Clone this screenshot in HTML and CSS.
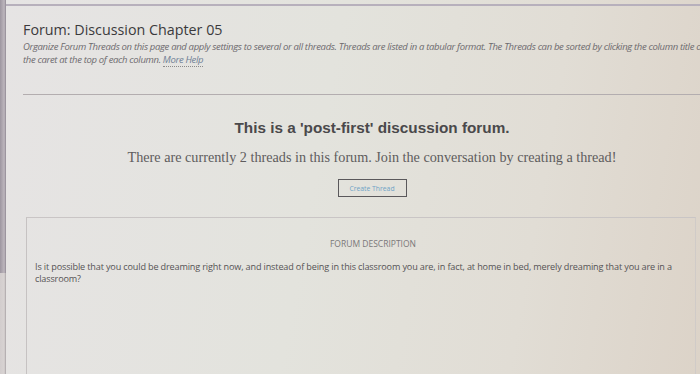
FILE: index.html
```html
<!DOCTYPE html>
<html>
<head>
<meta charset="utf-8">
<link rel="stylesheet" href="styles.css">
</head>
<body>
<div class="screen">
  <div class="edge"><div class="edge-top"></div><div class="edge-bottom"></div></div>
  <main class="content">
    <div class="topline"></div>
    <header class="head">
      <h1 class="title">Forum: Discussion Chapter 05</h1>
      <p class="desc">Organize Forum Threads on this page and apply settings to several or all threads. Threads are listed in a tabular format. The Threads can be sorted by clicking the column title on<br>the caret at the top of each column. <a class="help">More Help</a></p>
    </header>
    <div class="divider"></div>
    <section class="notice">
      <h2 class="notice-title">This is a 'post-first' discussion forum.</h2>
      <p class="notice-text">There are currently 2 threads in this forum. Join the conversation by creating a thread!</p>
      <button class="create-btn">Create Thread</button>
    </section>
    <section class="descbox">
      <div class="desc-label">FORUM DESCRIPTION</div>
      <p class="desc-body">Is it possible that you could be dreaming right now, and instead of being in this classroom you are, in fact, at home in bed, merely dreaming that you are in a classroom?</p>
    </section>
  </main>
</div>
</body>
</html>
```
FILE: styles.css
```css
html, body {
  margin: 0;
  padding: 0;
}
body {
  width: 700px;
  height: 374px;
  overflow: hidden;
}
.screen {
  width: 700px;
  height: 374px;
  display: flex;
  overflow: hidden;
  background: linear-gradient(100deg, #e6e4e4 0%, #e3e3dd 45%, #e1ddd5 75%, #dcd3c8 100%);
}
.edge {
  width: 6px;
  flex: none;
  display: flex;
  flex-direction: column;
}
.edge-top {
  height: 273px;
  background: linear-gradient(90deg, #9d96a0 0%, #bdb6bd 70%, #8f8893 100%);
}
.edge-bottom {
  flex: 1;
  background: linear-gradient(90deg, #d2cdcd 0%, #d8d3d2 70%, #a9a3a6 100%);
}
.content {
  flex: 1;
  min-width: 0;
  display: flex;
  flex-direction: column;
}
.topline {
  height: 2px;
  margin-top: 4px;
  background: #b7b0bc;
}
.head {
  padding: 14px 0 0 17px;
}
.title {
  margin: 0;
  font-family: "Open Sans", sans-serif;
  font-weight: 400;
  font-size: 14.3px;
  line-height: 20px;
  color: #3b3a3c;
}
.desc {
  margin: 0;
  font-family: "Open Sans", sans-serif;
  font-style: italic;
  font-size: 9.5px;
  line-height: 13px;
  color: #6d6a6e;
  white-space: nowrap;
  letter-spacing: -0.33px;
}
.help {
  color: #6f7f95;
  border-bottom: 1px dotted #8a8a8a;
}
.divider {
  height: 1px;
  margin: 28px 0 0 17px;
  background: #b3adaf;
}
.notice {
  display: flex;
  flex-direction: column;
  align-items: center;
  padding: 24px 0 0 38px;
}
.notice-title {
  margin: 0;
  font-family: "Liberation Sans", Arial, sans-serif;
  font-weight: 700;
  font-size: 15.3px;
  line-height: 18px;
  color: #4a494b;
}
.notice-text {
  margin: 12px 0 0;
  font-family: "Liberation Serif", serif;
  font-size: 14.2px;
  line-height: 17px;
  color: #5e5c5d;
}
.create-btn {
  margin-top: 13px;
  width: 69px;
  height: 18px;
  padding: 0;
  border: 1.5px solid #5a585b;
  background: transparent;
  font-family: "Open Sans", sans-serif;
  font-size: 6.8px;
  color: #6fa3c6;
}
.descbox {
  margin: 20px 4px 0 20px;
  flex: 1;
  border-top: 1px solid #c9c5c5;
  border-left: 1px solid #c6c2c2;
  border-right: 1px solid #d0cbc8;
  padding: 21px 0 0 8px;
}
.desc-label {
  text-align: center;
  font-family: "Open Sans", sans-serif;
  font-size: 8.5px;
  line-height: 10px;
  color: #7a7879;
  padding-left: 16px;
}
.desc-body {
  margin: 12px 0 0;
  width: 650px;
  font-family: "Open Sans", sans-serif;
  font-size: 9.1px;
  line-height: 12px;
  color: #555355;
  letter-spacing: -0.15px;
}
```
